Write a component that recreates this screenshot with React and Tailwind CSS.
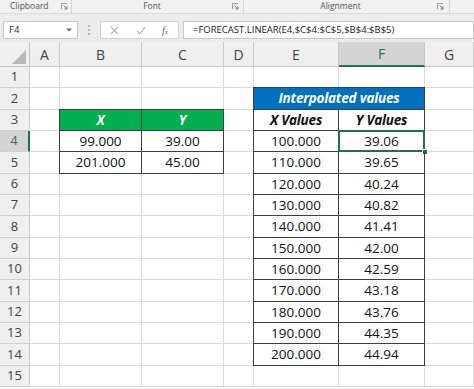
import React from 'react';

const cols = ['A', 'B', 'C', 'D', 'E', 'F', 'G'];
const rows = Array.from({ length: 15 }, (_, i) => i + 1);

const interp = [
  ['100.000', '39.06'],
  ['110.000', '39.65'],
  ['120.000', '40.24'],
  ['130.000', '40.82'],
  ['140.000', '41.41'],
  ['150.000', '42.00'],
  ['160.000', '42.59'],
  ['170.000', '43.18'],
  ['180.000', '43.76'],
  ['190.000', '44.35'],
  ['200.000', '44.94'],
];

// cells covered by the two bordered tables
const inXY = (c, r) => (c === 'B' || c === 'C') && r >= 3 && r <= 5;
const inInterp = (c, r) => (c === 'E' || c === 'F') && r >= 2 && r <= 14;

const Launcher = () => (
  <svg width="7" height="7" viewBox="0 0 7 7" className="shrink-0">
    <path d="M0.5 6V0.5H6" stroke="#9a9a9a" fill="none" />
    <path d="M2.5 2.5L6 6M6 3.5V6H3.5" stroke="#7a7a7a" fill="none" />
  </svg>
);

const RibbonLabels = () => (
  <div className="flex h-[14px] bg-[#f1f1f1] border-b border-[#dadada] text-[8.5px] leading-none text-[#555]">
    <div className="flex w-[72px] items-center justify-between border-r border-[#d6d6d6] pl-[10px] pr-[3px]">
      <span>Clipboard</span>
      <Launcher />
    </div>
    <div className="flex w-[172px] items-center border-r border-[#d6d6d6] pr-[4px]">
      <span className="flex-1 text-center">Font</span>
      <Launcher />
    </div>
    <div className="flex w-[206px] items-center border-r border-[#d6d6d6] pr-[5px]">
      <span className="flex-1 text-center">Alignment</span>
      <Launcher />
    </div>
  </div>
);

const FormulaBar = () => (
  <div className="flex h-[28px] items-start bg-[#ececec] pt-[7px]">
    <div className="ml-[3px] flex h-[18px] w-[75px] items-center justify-between border border-[#c8c8c8] bg-white pl-[5px] pr-[5px] text-[9.5px] text-[#333]">
      <span>F4</span>
      <svg width="6" height="4" viewBox="0 0 6 4">
        <path d="M0 0.5H6L3 3.5Z" fill="#6a6a6a" />
      </svg>
    </div>
    <div className="flex h-[18px] w-[22px] flex-col items-center justify-center gap-[2px]">
      <span className="h-[2px] w-[2px] bg-[#b5b5b5]" />
      <span className="h-[2px] w-[2px] bg-[#b5b5b5]" />
      <span className="h-[2px] w-[2px] bg-[#b5b5b5]" />
    </div>
    <div className="flex h-[18px] w-[79px] items-center border border-[#d2d2d2] bg-white">
      <svg width="9" height="9" viewBox="0 0 9 9" className="ml-[9px]">
        <path d="M1 1L8 8M8 1L1 8" stroke="#b2b2b2" strokeWidth="1.1" />
      </svg>
      <svg width="10" height="9" viewBox="0 0 10 9" className="ml-[17px]">
        <path d="M1 5L3.8 7.8L9 1.2" stroke="#b2b2b2" strokeWidth="1.1" fill="none" />
      </svg>
      <span className="ml-[16px] font-['Liberation_Serif',serif] text-[10px] italic text-[#555]">
        f<span className="text-[7px]">x</span>
      </span>
    </div>
    <div className="ml-[4px] flex h-[18px] flex-1 items-center border border-[#c8c8c8] bg-white pl-[9px] text-[9.5px] text-[#222]">
      =FORECAST.LINEAR(E4,$C$4:$C$5,$B$4:$B$5)
    </div>
  </div>
);

const ColHeader = ({ c }) => {
  const active = c === 'F';
  return (
    <div
      className={`flex items-center justify-center border-r border-b text-[14px] ${
        active
          ? 'bg-[#d4d4d4] border-r-[#c6c6c6] border-b-2 border-b-[#217346] text-[#3d6b4f]'
          : 'bg-[#efefef] border-[#c9c9c9] text-[#444]'
      }`}
    >
      {c}
    </div>
  );
};

const RowHeader = ({ r }) => {
  const active = r === 4;
  return (
    <div
      className={`flex items-center justify-center border-b text-[13px] ${
        active
          ? 'bg-[#d4d4d4] border-b-[#cfcfcf] border-r-2 border-r-[#217346] text-[#3d6b4f]'
          : 'bg-[#efefef] border-r border-[#cfcfcf] text-[#444]'
      }`}
    >
      {r}
    </div>
  );
};

const App = () => {
  return (
    <div className="h-[389px] w-[474px] overflow-hidden bg-white font-['Open_Sans',sans-serif]">
      <RibbonLabels />
      <FormulaBar />

      <div className="grid grid-cols-[30px_30px_82px_82px_30px_85px_86px_1fr] grid-rows-[25px_repeat(15,21.33px)]">
        {/* corner */}
        <div className="flex items-end justify-end border-r border-b border-[#c6c6c6] bg-[#efefef] pb-[2px] pr-[3px]">
          <svg width="14" height="14" viewBox="0 0 14 14">
            <path d="M14 0V14H0Z" fill="#b8b8b8" />
          </svg>
        </div>
        {cols.map((c) => (
          <ColHeader key={c} c={c} />
        ))}

        {rows.map((r) => (
          <React.Fragment key={r}>
            <RowHeader r={r} />
            {cols
              .filter((c) => !inXY(c, r) && !inInterp(c, r))
              .map((c) => (
                <div key={c + r} className="border-r border-b border-[#dadada] bg-white" />
              ))}
          </React.Fragment>
        ))}

        {/* X / Y source table */}
        <div className="col-start-3 col-span-2 row-start-4 row-span-3 -ml-px -mt-px grid grid-cols-[82px_82px] auto-rows-[21.33px] border-l border-t border-[#3f3f3f] bg-white text-[13.5px] text-[#111]">
          <div className="flex items-center justify-center border-r border-b border-[#3f3f3f] bg-[#00b050] font-bold italic text-white">
            X
          </div>
          <div className="flex items-center justify-center border-r border-b border-[#3f3f3f] bg-[#00b050] font-bold italic text-white">
            Y
          </div>
          <div className="flex items-center justify-center border-r border-b border-[#3f3f3f]">99.000</div>
          <div className="flex items-center justify-center border-r border-b border-[#3f3f3f]">39.00</div>
          <div className="flex items-center justify-center border-r border-b border-[#3f3f3f]">201.000</div>
          <div className="flex items-center justify-center border-r border-b border-[#3f3f3f]">45.00</div>
        </div>

        {/* Interpolated values table */}
        <div className="col-start-6 col-span-2 row-start-3 row-span-13 -ml-px -mt-px grid grid-cols-[85px_86px] auto-rows-[21.33px] border-l border-t border-[#3f3f3f] bg-white text-[13.5px] text-[#111]">
          <div className="col-span-2 flex items-center justify-center border-r border-b border-[#3f3f3f] bg-[#0070c0] font-bold italic tracking-[-0.2px] text-white">
            Interpolated values
          </div>
          <div className="flex items-center justify-center border-r border-b border-[#3f3f3f] font-bold italic tracking-[-0.2px]">
            X Values
          </div>
          <div className="flex items-center justify-center border-r border-b border-[#3f3f3f] font-bold italic tracking-[-0.2px]">
            Y Values
          </div>
          {interp.map(([x, y], i) => (
            <React.Fragment key={x}>
              <div className="flex items-center justify-center border-r border-b border-[#3f3f3f]">{x}</div>
              <div className="relative flex items-center justify-center border-r border-b border-[#3f3f3f]">
                {y}
                {i === 0 && (
                  <>
                    <div className="absolute -left-px -top-px -right-px -bottom-px border-2 border-[#217346]" />
                    <div className="absolute -bottom-[4px] -right-[4px] h-[6px] w-[6px] border border-white bg-[#217346]" />
                  </>
                )}
              </div>
            </React.Fragment>
          ))}
        </div>
      </div>
    </div>
  );
};

export default App;
